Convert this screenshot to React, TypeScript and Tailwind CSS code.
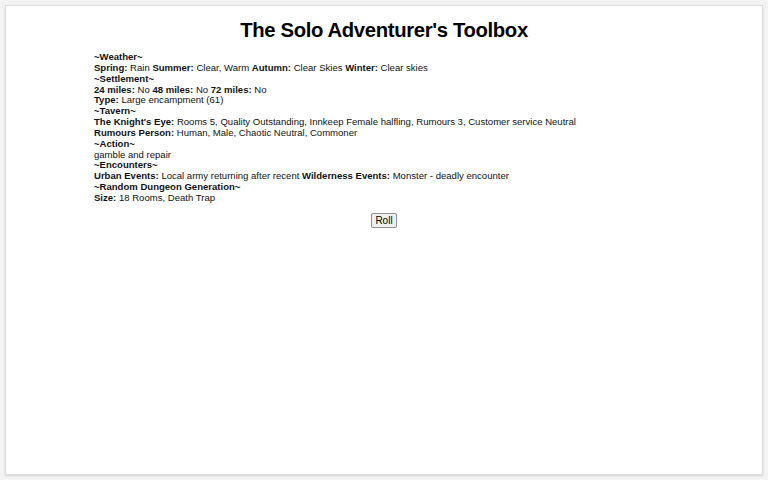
import React from "react";

const B = ({ children }: { children: React.ReactNode }) => <b className="font-bold">{children}</b>;

export default function App() {
  return (
    <div className="w-[768px] h-[480px] bg-[#f3f3f3] p-[5px] overflow-hidden" style={{ fontFamily: '"Liberation Sans", Arial, sans-serif' }}>
      <div className="h-[470px] bg-white border border-[#dcdcdc] shadow-[0_1px_2px_rgba(0,0,0,0.12)] flex flex-col items-center">
        <h1 className="mt-[12px] text-[20.3px] leading-[24px] tracking-[-0.35px] font-bold text-black">The Solo Adventurer's Toolbox</h1>
        <div className="w-[580px] mt-[10px] text-[9.55px] leading-[10.85px] text-[#111]">
          <div><B>~Weather~</B></div>
          <div><B>Spring:</B> Rain <B>Summer:</B> Clear, Warm <B>Autumn:</B> Clear Skies <B>Winter:</B> Clear skies</div>
          <div><B>~Settlement~</B></div>
          <div><B>24 miles:</B> No <B>48 miles:</B> No <B>72 miles:</B> No</div>
          <div><B>Type:</B> Large encampment (61)</div>
          <div><B>~Tavern~</B></div>
          <div><B>The Knight's Eye:</B> Rooms 5, Quality Outstanding, Innkeep Female halfling, Rumours 3, Customer service Neutral</div>
          <div><B>Rumours Person:</B> Human, Male, Chaotic Neutral, Commoner</div>
          <div><B>~Action~</B></div>
          <div>gamble and repair</div>
          <div><B>~Encounters~</B></div>
          <div><B>Urban Events:</B> Local army returning after recent <B>Wilderness Events:</B> Monster - deadly encounter</div>
          <div><B>~Random Dungeon Generation~</B></div>
          <div><B>Size:</B> 18 Rooms, Death Trap</div>
        </div>
        <button className="mt-[9px] h-[15px] px-[3px] text-[10px] leading-[13px] border border-[#8f8f8f] rounded-[2px] bg-[#efefef] text-black">Roll</button>
      </div>
    </div>
  );
}
